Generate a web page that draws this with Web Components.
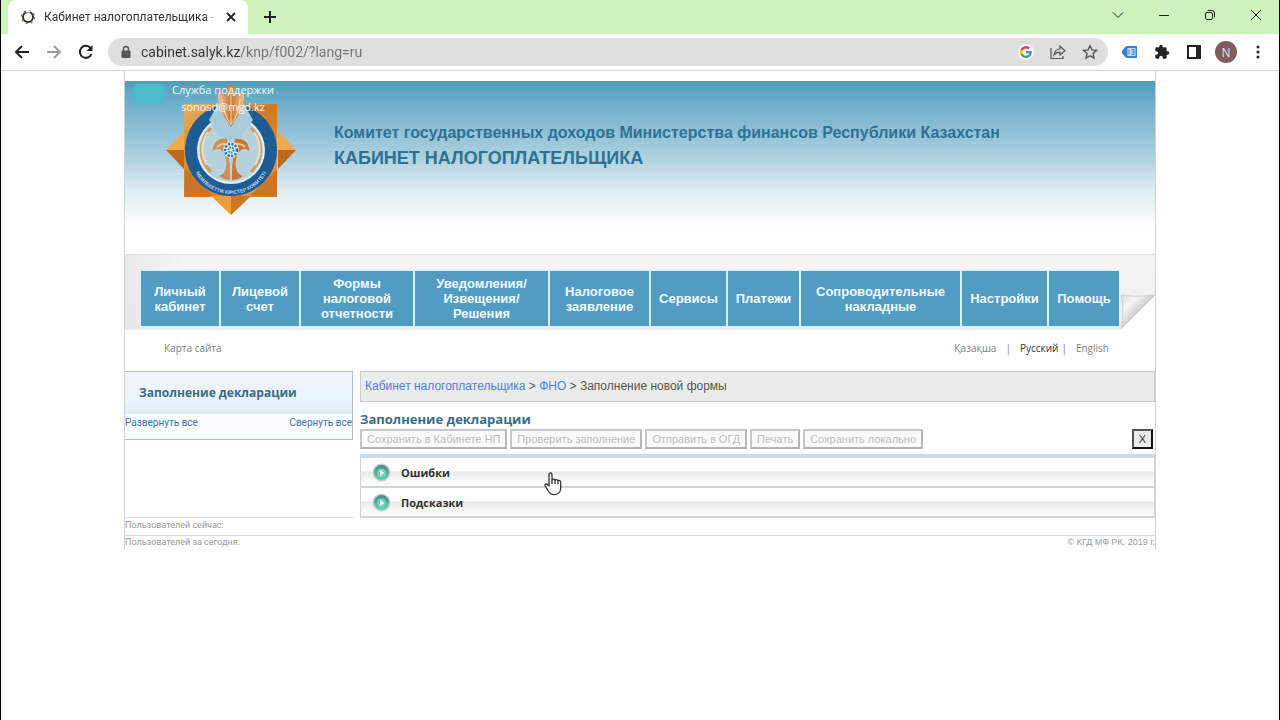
<!DOCTYPE html>
<html lang="ru">
<head>
<meta charset="utf-8">
<title>Кабинет налогоплательщика</title>
<style>
  html, body { margin: 0; height: 100%; }
  body {
    background: #fff;
    font-family: Roboto, "Open Sans", sans-serif;
    overflow: hidden;
  }
</style>
</head>
<body>

<browser-window>
  <browser-tabs slot="tabs">Кабинет налогоплательщика - С</browser-tabs>
  <browser-toolbar slot="toolbar" url="cabinet.salyk.kz/knp/f002/?lang=ru"></browser-toolbar>

  <portal-page>
    <portal-header slot="header">
      <span slot="committee">Комитет государственных доходов Министерства финансов Республики Казахстан</span>
      <span slot="title">КАБИНЕТ НАЛОГОПЛАТЕЛЬЩИКА</span>
    </portal-header>
    <portal-nav slot="header"></portal-nav>
    <portal-links slot="header"></portal-links>

    <side-panel slot="side" heading="Заполнение декларации"></side-panel>

    <bread-crumbs>
      <a href="#cabinet">Кабинет налогоплательщика</a> &gt; <a href="#fno">ФНО</a> &gt; Заполнение новой формы
    </bread-crumbs>
    <form-toolbar heading="Заполнение декларации"></form-toolbar>
    <accordion-row>Ошибки</accordion-row>
    <accordion-row>Подсказки</accordion-row>
    <hand-cursor></hand-cursor>

    <portal-footer slot="footer"></portal-footer>
  </portal-page>
</browser-window>

<script>
  class BrowserWindow extends HTMLElement {
    constructor() {
      super();
      this.attachShadow({ mode: 'open' });
      this.shadowRoot.innerHTML = `
        <style>
          :host {
            display: flex;
            flex-direction: column;
            box-sizing: border-box;
            min-height: 100%;
            border: solid #000;
            border-width: 0 1px;
            background: #fff;
          }
          main { flex: 1; }
        </style>
        <slot name="tabs"></slot>
        <slot name="toolbar"></slot>
        <main><slot></slot></main>
      `;
    }
  }

  class BrowserTabs extends HTMLElement {
    constructor() {
      super();
      this.attachShadow({ mode: 'open' });
      this.shadowRoot.innerHTML = `
        <style>
          :host {
            display: flex;
            align-items: stretch;
            height: 34px;
            background: #cdf2bb;
            color: #333;
            font-size: 12px;
          }
          .tab {
            display: flex;
            align-items: center;
            box-sizing: border-box;
            width: 240px;
            margin-left: 7px;
            padding: 0 10px 0 12px;
            background: #fff;
            border-radius: 8px 8px 0 0;
          }
          .label {
            flex: 1;
            margin: 0 6px 0 8px;
            overflow: hidden;
            white-space: nowrap;
            -webkit-mask: linear-gradient(90deg, #000 92%, transparent);
            mask: linear-gradient(90deg, #000 92%, transparent);
          }
          button {
            display: flex;
            align-items: center;
            justify-content: center;
            padding: 0;
            border: 0;
            background: none;
            color: #222;
          }
          .tab button { width: 14px; }
          .new { width: 44px; }
          .controls { display: flex; margin-left: auto; padding-top: 1px; align-items: flex-start; }
          .controls button { width: 46px; height: 27px; }
          svg { fill: none; stroke: currentColor; display: block; }
        </style>
        <div class="tab">
          <svg width="16" height="16" viewBox="0 0 16 16" stroke="#6b6455">
            <circle cx="8" cy="8" r="5" stroke-width="2"/>
            <circle cx="8" cy="8" r="6.5" stroke="#8d7a5e" stroke-width="1.5" stroke-dasharray="2 3.1"/>
            <path d="M6 2.5h4" stroke="#fff" stroke-width="2"/>
          </svg>
          <span class="label"><slot></slot></span>
          <button aria-label="Закрыть вкладку">
            <svg width="10" height="10" viewBox="0 0 10 10" stroke-width="1.8"><path d="M1 1l8 8M9 1L1 9"/></svg>
          </button>
        </div>
        <button class="new" aria-label="Новая вкладка">
          <svg width="12" height="12" viewBox="0 0 12 12" stroke-width="2"><path d="M6 0v12M0 6h12"/></svg>
        </button>
        <div class="controls">
          <button aria-label="Поиск вкладок"><svg width="12" height="12" viewBox="0 0 12 12"><path d="M1 3.5l5 5 5-5"/></svg></button>
          <button aria-label="Свернуть"><svg width="12" height="12" viewBox="0 0 12 12"><path d="M1 6.5h10"/></svg></button>
          <button aria-label="Развернуть"><svg width="12" height="12" viewBox="0 0 12 12"><rect x="1.5" y="3.5" width="7" height="7" rx="1.5"/><path d="M3.5 1.5H8A2.5 2.5 0 0 1 10.5 4v4.5"/></svg></button>
          <button aria-label="Закрыть"><svg width="12" height="12" viewBox="0 0 12 12"><path d="M1 1l10 10M11 1L1 11"/></svg></button>
        </div>
      `;
    }
  }

  class BrowserToolbar extends HTMLElement {
    constructor() {
      super();
      this.attachShadow({ mode: 'open' });
      this.shadowRoot.innerHTML = `
        <style>
          :host {
            display: flex;
            align-items: center;
            gap: 8px;
            box-sizing: border-box;
            height: 37px;
            padding: 0 9px;
            border-bottom: 1px solid #d5d5d5;
            background: #fff;
            color: #222;
          }
          button {
            display: flex;
            align-items: center;
            justify-content: center;
            flex: none;
            width: 24px;
            height: 24px;
            padding: 0;
            border: 0;
            background: none;
            color: inherit;
          }
          svg { display: block; }
          .line { fill: none; stroke: currentColor; }
          .omnibox {
            display: flex;
            flex: 1;
            align-items: center;
            gap: 8px;
            height: 28px;
            margin-left: 2px;
            padding: 0 6px 0 11px;
            border-radius: 14px;
            background: #dfdfdf;
            color: #555;
          }
          /* the host part of the address is darker than the path */
          input {
            flex: 1;
            min-width: 0;
            padding: 0;
            border: 0;
            outline: 0;
            font: 14px Roboto, "Open Sans", sans-serif;
            color: transparent;
            background: linear-gradient(90deg, #333 99px, #737373 99px);
            -webkit-background-clip: text;
            background-clip: text;
          }
          .forward { color: #999; }
          .google { width: 16px; height: 16px; background: #fff; border-radius: 50%; margin-right: 4px; }
          .avatar {
            width: 22px;
            height: 22px;
            margin: 0 1px;
            border-radius: 50%;
            background: #7d5e58;
            color: #f3e3df;
            font: 12px "Open Sans", sans-serif;
          }
          .tools { display: flex; align-items: center; gap: 8px; padding-left: 2px; }
        </style>
        <button aria-label="Назад"><svg class="line" width="16" height="16" viewBox="0 0 16 16" stroke-width="2"><path d="M15 8H2M8 2L2 8l6 6"/></svg></button>
        <button class="forward" aria-label="Вперёд"><svg class="line" width="16" height="16" viewBox="0 0 16 16" stroke-width="1.8"><path d="M1 8h13M8 2l6 6-6 6"/></svg></button>
        <button aria-label="Обновить"><svg class="line" width="16" height="16" viewBox="0 0 16 16" stroke-width="2"><path d="M13.5 10A6 6 0 1 1 12.5 4"/><path d="M14.5 1v6h-6z" fill="currentColor" stroke="none"/></svg></button>
        <div class="omnibox">
          <svg width="14" height="14" viewBox="0 0 14 14"><rect x="2.5" y="5.5" width="9" height="7.5" rx="1" fill="#555"/><path d="M4.5 6V4a2.5 2.5 0 0 1 5 0v2" fill="none" stroke="#555" stroke-width="1.5"/></svg>
          <input type="text" aria-label="Адресная строка">
          <button class="google" aria-label="Google">
            <svg width="12" height="12" viewBox="0 0 48 48">
              <path fill="#ea4335" d="M24 9.500c3.500 0 6.700 1.200 9.200 3.600l6.900-6.900C35.900 2.400 30.500 0 24 0 14.600 0 6.500 5.400 2.600 13.200l8 6.200C12.400 13.700 17.700 9.500 24 9.500z"/>
              <path fill="#4285f4" d="M47 24.600c0-1.600-.2-3.100-.4-4.600H24v9h12.900c-.6 3-2.200 5.500-4.700 7.200l7.700 6C44.400 38 47 32 47 24.600z"/>
              <path fill="#fbbc05" d="M10.500 28.600a14.500 14.500 0 0 1 0-9.200l-8-6.200a24 24 0 0 0 0 21.600z"/>
              <path fill="#34a853" d="M24 48c6.500 0 11.900-2.100 15.900-5.800l-7.700-6c-2.200 1.500-4.900 2.300-8.200 2.300-6.300 0-11.600-4.200-13.500-9.900l-8 6.200C6.500 42.600 14.600 48 24 48z"/>
            </svg>
          </button>
          <button aria-label="Поделиться"><svg class="line" width="16" height="16" viewBox="0 0 16 16" stroke-width="1.2"><path d="M1 4v10.500h12V12M4 11c.5-4 2.500-6 6-6V2.200l5 4.500-5 4.300V8.200C7.500 8.200 5.500 9 4 11z"/></svg></button>
          <button aria-label="Добавить в закладки"><svg class="line" width="16" height="16" viewBox="0 0 16 16" stroke-width="1.4"><path d="M8 1.700l1.900 4.200 4.500.5-3.400 3.100 1 4.500-4-2.300L4 14l1-4.500L1.600 6.400l4.500-.5z"/></svg></button>
        </div>
        <div class="tools">
          <button aria-label="Расширение"><svg width="16" height="14" viewBox="0 0 16 14"><path d="M4.500 1H15v12H4.500L0 8.500v-3z" fill="#3f7fd0"/><rect x="5.500" y="3" width="8" height="8" fill="#c9e0f8"/><path d="M7 4.500v5M9.500 4.500h2.500v5H9.500M9.500 7H12" fill="none" stroke="#3f7fd0"/></svg></button>
          <button aria-label="Расширения"><svg width="16" height="16" viewBox="0 0 24 24"><path fill="#222" d="M20.500 11H19V7a2 2 0 0 0-2-2h-4V3.500a2.500 2.500 0 0 0-5 0V5H4a2 2 0 0 0-2 2v3.800h1.500a2.700 2.700 0 0 1 0 5.400H2V20a2 2 0 0 0 2 2h3.800v-1.500a2.700 2.700 0 0 1 5.400 0V22H17a2 2 0 0 0 2-2v-4h1.500a2.500 2.500 0 0 0 0-5z"/></svg></button>
          <button aria-label="Боковая панель"><svg width="14" height="14" viewBox="0 0 14 14"><rect x="1" y="1" width="12" height="12" fill="none" stroke="#222" stroke-width="2"/><path d="M9 1h4v12H9z" fill="#222"/></svg></button>
          <button class="avatar">N</button>
          <button aria-label="Меню"><svg width="4" height="14" viewBox="0 0 4 14" fill="#222"><circle cx="2" cy="2" r="1.5"/><circle cx="2" cy="7" r="1.5"/><circle cx="2" cy="12" r="1.5"/></svg></button>
        </div>
      `;
    }

    connectedCallback() {
      this.shadowRoot.querySelector('input').value = this.getAttribute('url');
    }
  }

  class PortalPage extends HTMLElement {
    constructor() {
      super();
      this.attachShadow({ mode: 'open' });
      this.shadowRoot.innerHTML = `
        <style>
          :host {
            display: block;
            box-sizing: border-box;
            max-width: 1032px;
            margin: 0 auto;
            padding-top: 10px;
            border: solid #d3d3d3;
            border-width: 0 1px;
          }
          .columns {
            display: grid;
            grid-template-columns: 228px 1fr;
            gap: 7px;
          }
          .side { border-bottom: 1px solid #ddd; }
          .content { position: relative; min-width: 0; }
        </style>
        <slot name="header"></slot>
        <div class="columns">
          <div class="side"><slot name="side"></slot></div>
          <div class="content"><slot></slot></div>
        </div>
        <slot name="footer"></slot>
      `;
    }
  }

  class PortalHeader extends HTMLElement {
    constructor() {
      super();
      this.attachShadow({ mode: 'open' });
      this.shadowRoot.innerHTML = `
        <style>
          :host {
            display: grid;
            grid-template-columns: 209px 1fr;
            height: 173px;
            background: linear-gradient(#4f9aba 0, #65abc6 14px, #7ab5d0 32px, #a9d0df 74px, #dcebf2 108px, #fff 146px);
            font-family: "Liberation Sans", Arial, sans-serif;
          }
          .brand { position: relative; }
          .brand > svg { position: absolute; left: 40px; top: 3px; }
          .support {
            position: absolute;
            left: 9px;
            top: 0;
            display: flex;
            gap: 8px;
            color: #f2fafc;
            font: 11px/17px "Open Sans", "Noto Sans", sans-serif;
            text-align: center;
          }
          .support i { width: 30px; height: 20px; margin-top: 3px; background: #4dbccb; filter: blur(1px); }
          .support a { display: block; color: inherit; text-decoration: none; }
          .titles { padding-top: 39px; color: #2f7190; font-weight: bold; }
          .titles ::slotted(*) { display: block; }
          .committee { font-size: 16px; line-height: 25px; }
          .title { font-size: 18px; line-height: 26px; }
          .ring { font: bold 5px "Liberation Sans", sans-serif; fill: #c7d9e4; }
        </style>
        <div class="brand">
          <svg width="132" height="132" viewBox="-66 -66 132 132">
            <defs>
              <linearGradient id="gold" x1="0" y1="0" x2="1" y2="1">
                <stop offset="0" stop-color="#e8ae60"/><stop offset=".5" stop-color="#cf7b22"/><stop offset="1" stop-color="#e6a04a"/>
              </linearGradient>
              <linearGradient id="fan" x1="0" y1="0" x2="1" y2="0">
                <stop offset="0" stop-color="#f0c391"/><stop offset=".5" stop-color="#c87a35"/><stop offset="1" stop-color="#f0c391"/>
              </linearGradient>
              <path id="arc" d="M-40 4A40 40 0 0 0 40 4"/>
            </defs>
            <rect x="-47" y="-46" width="93" height="93" fill="url(#gold)"/>
            <path d="M-65 0l18-19V0zM47-19L65 0H47z" fill="#f0a950"/>
            <path d="M-65 0h18v19zM65 0H47v19z" fill="#bd681b"/>
            <path d="M-46 47l27-1-27-27zM46 47L19 46l27-27z" fill="#c9752a"/>
            <path d="M0 65l-20-19H0z" fill="#ee9e3b"/><path d="M0 65l20-19H0z" fill="#ce7720"/>
            <circle r="46" fill="#1d5c94"/>
            <circle r="34" fill="#e9eeee"/>
            <circle r="32" fill="#b5d2dd"/>
            <path d="M-20-22a30 30 0 0 0 0 44M20-22a30 30 0 0 1 0 44" fill="none" stroke="#d39a63" stroke-width="3"/>
            <path d="M-23-18a29 29 0 0 0-1 33M23-18a29 29 0 0 1 1 33" fill="none" stroke="#f4dfc6" stroke-width="2"/>
            <path d="M-13-46h26l9 16L8-10H-8l-14-20z" fill="#a7cddd"/>
            <path d="M0-66c-5 3-6 9-4 15-5-8-10-10-9-2 1 9 3 18 9 24l4 6 4-6c6-6 8-15 9-24 1-8-4-6-9 2 2-6 1-12-4-15z" fill="url(#fan)"/>
            <path d="M0-63v38M-9-51c1 10 4 19 9 25M9-51c-1 10-4 19-9 25" fill="none" stroke="#f6d8b2"/>
            <path d="M-4-11c-9-2-15 5-14 12 3-3 6-3 9 0 4 5 6 12 3 20-1 3-4 4-6 5 4 3 8 4 11 4 0-8 0-14-1-21z" fill="#d18e4e"/>
            <path d="M4-11c9-2 15 5 14 12-3-3-6-3-9 0-4 5-6 12-3 20 1 3 4 4 6 5-4 3-8 4-11 4 0-8 0-14 1-21z" fill="#c87835"/>
            <path d="M-14-3c4-4 8-4 11-1M14-3c-4-4-8-4-11-1" fill="none" stroke="#f3c692" stroke-width="2"/>
            <circle r="8" fill="#d9edf3"/>
            <circle r="6" fill="none" stroke="#1e6b9c" stroke-width="2.5" stroke-dasharray="2 1.5"/>
            <circle r="2.5" fill="none" stroke="#2d7eaa" stroke-width="2" stroke-dasharray="1.5 1"/>
            <text class="ring"><textPath href="#arc" startOffset="50%" text-anchor="middle">МЕМЛЕКЕТТІК КІРІСТЕР КОМИТЕТІ</textPath></text>
          </svg>
          <div class="support">
            <i></i>
            <div>Служба поддержки<a href="mailto:sonosd@mgd.kz">sonosd@mgd.kz</a></div>
          </div>
        </div>
        <div class="titles">
          <div class="committee"><slot name="committee"></slot></div>
          <div class="title"><slot name="title"></slot></div>
        </div>
      `;
    }
  }

  const NAV_ITEMS = [
    'Личный<br>кабинет',
    'Лицевой<br>счет',
    'Формы<br>налоговой<br>отчетности',
    'Уведомления/<br>Извещения/<br>Решения',
    'Налоговое<br>заявление',
    'Сервисы',
    'Платежи',
    'Сопроводительные<br>накладные',
    'Настройки',
    'Помощь',
  ];

  class PortalNav extends HTMLElement {
    constructor() {
      super();
      this.attachShadow({ mode: 'open' });
      this.shadowRoot.innerHTML = `
        <style>
          :host {
            display: block;
            position: relative;
            box-sizing: border-box;
            height: 76px;
            padding: 15px 35px 3px 15px;
            border-top: 1px solid #ddd;
            background: linear-gradient(90deg, #e9e9e9, transparent 60px), linear-gradient(#f5f5f5, #ededed);
          }
          nav {
            display: grid;
            grid-template-columns: 78fr 78fr 112fr 133fr 99fr 75fr 71fr 159fr 85fr 70fr;
            gap: 2px;
            padding: 1px;
            background: #d5f3fa;
          }
          a {
            display: flex;
            align-items: center;
            justify-content: center;
            height: 55px;
            background: #529bc2;
            color: #f0fbff;
            font: bold 13px/15px "Liberation Sans", Arial, sans-serif;
            text-align: center;
            text-decoration: none;
          }
          svg { position: absolute; right: 0; bottom: 0; }
        </style>
        <nav>${NAV_ITEMS.map((item) => `<a href="#"><span>${item}</span></a>`).join('')}</nav>
        <svg width="35" height="36" viewBox="0 0 35 36">
          <defs>
            <linearGradient id="curl" x1="0" y1="0" x2=".5" y2=".5">
              <stop offset="0" stop-color="#d9d9d9"/><stop offset=".5" stop-color="#f5f5f5"/><stop offset="1" stop-color="#cfcfcf"/>
            </linearGradient>
          </defs>
          <path d="M35 0v36H0z" fill="#fff"/>
          <path d="M1 35C3 24 4 12 1 1c12 2 24 1 34 0z" fill="url(#curl)" stroke="#ccc"/>
        </svg>
      `;
    }
  }

  class PortalLinks extends HTMLElement {
    constructor() {
      super();
      this.attachShadow({ mode: 'open' });
      this.shadowRoot.innerHTML = `
        <style>
          :host {
            display: flex;
            justify-content: space-between;
            height: 41px;
            padding: 0 46px 0 39px;
            color: #808080;
            font: 10px/37px "Open Sans", "Noto Sans", sans-serif;
          }
          a { color: inherit; text-decoration: none; }
          .languages { display: flex; gap: 9px; }
          .current { color: #333; }
          .current + span { margin-left: -6px; }
        </style>
        <a href="#map">Карта сайта</a>
        <div class="languages">
          <a href="#kk">Қазақша</a><span>|</span>
          <a class="current" href="#ru">Русский</a><span>|</span>
          <a href="#en">English</a>
        </div>
      `;
    }
  }

  class SidePanel extends HTMLElement {
    constructor() {
      super();
      this.attachShadow({ mode: 'open' });
      this.shadowRoot.innerHTML = `
        <style>
          :host {
            display: block;
            border: 1px solid #b4bec6;
            border-left: 0;
            background: #f8fcff;
          }
          h2 {
            margin: 0;
            padding: 0 14px;
            background: linear-gradient(#f0f4fa, #ebf4fc 60%, #d9ebfa);
            color: #376c84;
            font: bold 12px/42px "Open Sans", "Noto Sans", sans-serif;
          }
          div {
            display: flex;
            justify-content: space-between;
            height: 25px;
            font-size: 10px;
            line-height: 18px;
          }
          a { color: #3c74b4; text-decoration: none; }
        </style>
        <h2></h2>
        <div><a href="#expand">Развернуть все</a><a href="#collapse">Свернуть все</a></div>
      `;
    }

    connectedCallback() {
      this.shadowRoot.querySelector('h2').textContent = this.getAttribute('heading');
    }
  }

  class BreadCrumbs extends HTMLElement {
    constructor() {
      super();
      this.attachShadow({ mode: 'open' });
      this.shadowRoot.innerHTML = `
        <style>
          :host {
            display: block;
            padding: 0 4px;
            border: 1px solid #ccc;
            background: #ebebeb;
            color: #555;
            font: 12px/29px "Liberation Sans", Arial, sans-serif;
          }
          ::slotted(a) { color: #4a83d4; text-decoration: none; }
        </style>
        <slot></slot>
      `;
    }
  }

  class FormToolbar extends HTMLElement {
    constructor() {
      super();
      this.attachShadow({ mode: 'open' });
      this.shadowRoot.innerHTML = `
        <style>
          :host { display: block; padding-top: 8px; border-bottom: 4px solid #c9dbea; }
          h1 {
            margin: 0;
            color: #376c84;
            font: bold 13px/19px "Open Sans", "Noto Sans", sans-serif;
          }
          div { display: flex; gap: 3px; height: 25px; padding-right: 2px; align-items: flex-start; }
          button {
            box-sizing: border-box;
            height: 20px;
            padding: 0 5px;
            border: 2px solid #ccc;
            border-color: #c6c6c6 #b5b5b5 #b5b5b5 #c6c6c6;
            border-radius: 0;
            background: #fafafa;
            color: #333;
            font: 11px "Liberation Sans", Arial, sans-serif;
          }
          button:disabled { color: #bdbdbd; }
          .close {
            margin-left: auto;
            border-color: #555 #111 #111 #555;
            background: #ececec;
          }
        </style>
        <h1></h1>
        <div>
          <button disabled>Сохранить в Кабинете НП</button>
          <button disabled>Проверить заполнение</button>
          <button disabled>Отправить в ОГД</button>
          <button disabled>Печать</button>
          <button disabled>Сохранить локально</button>
          <button class="close">X</button>
        </div>
      `;
    }

    connectedCallback() {
      this.shadowRoot.querySelector('h1').textContent = this.getAttribute('heading');
    }
  }

  class AccordionRow extends HTMLElement {
    constructor() {
      super();
      this.attachShadow({ mode: 'open' });
      this.shadowRoot.innerHTML = `
        <style>
          :host { display: block; border: 1px solid #d3d3d3; border-width: 0 1px 2px; }
          button {
            display: flex;
            align-items: center;
            gap: 10px;
            width: 100%;
            height: 28px;
            padding: 0 11px;
            border: 0;
            background: linear-gradient(#fff 13px, #e9e9e9 14px, #f8f8f8 22px, #fbfbfb);
            color: #333;
            font: bold 11px "Open Sans", "Noto Sans", sans-serif;
          }
        </style>
        <button aria-expanded="false">
          <svg width="19" height="19" viewBox="0 0 19 19">
            <defs>
              <linearGradient id="ball" x1="0" y1="0" x2="0" y2="1">
                <stop offset="0" stop-color="#3f8f85"/><stop offset="1" stop-color="#5fd4b8"/>
              </linearGradient>
            </defs>
            <circle cx="9.5" cy="9.5" r="9" fill="#c3cdcb"/>
            <circle cx="9.5" cy="9.5" r="7.5" fill="url(#ball)"/>
            <circle cx="9.5" cy="10" r="4.5" fill="#7bcfc0"/>
            <path d="M8 7l4.500 3L8 13z" fill="#eefaf8"/>
          </svg>
          <slot></slot>
        </button>
      `;
    }
  }

  class HandCursor extends HTMLElement {
    constructor() {
      super();
      this.attachShadow({ mode: 'open' });
      this.shadowRoot.innerHTML = `
        <style>
          :host { position: absolute; left: 184px; top: 101px; pointer-events: none; }
          svg { display: block; }
        </style>
        <svg width="18" height="24" viewBox="0 0 18 24" fill="#fff" stroke="#333" stroke-width="1.3" stroke-linejoin="round">
          <path d="M5 14V2.500a1.500 1.500 0 0 1 3 0V8c.5-1.300 2.700-1.200 3 .4.600-1.200 2.700-.9 3 .6.800-1 2.700-.6 2.700 1.200V16c0 4-2.700 6.700-6.500 6.700-3.700 0-5.500-2.700-6.700-5L1.200 14c-.8-1.700 1-2.800 2.300-1.500z"/>
          <path d="M8 8v4M11 8.500V12M14 9.500V12" fill="none"/>
        </svg>
      `;
    }
  }

  class PortalFooter extends HTMLElement {
    constructor() {
      super();
      this.attachShadow({ mode: 'open' });
      this.shadowRoot.innerHTML = `
        <style>
          :host { display: block; padding-top: 1px; color: #999; font-size: 9px; line-height: 13px; }
          .now { height: 16px; border-bottom: 1px solid #ddd; }
          .today { display: flex; justify-content: space-between; }
          small { font: 9px/13px "Liberation Sans", Arial, sans-serif; }
        </style>
        <div class="now">Пользователей сейчас:</div>
        <div class="today"><span>Пользователей за сегодня:</span><small>© КГД МФ РК, 2019 г.</small></div>
      `;
    }
  }

  customElements.define('browser-window', BrowserWindow);
  customElements.define('browser-tabs', BrowserTabs);
  customElements.define('browser-toolbar', BrowserToolbar);
  customElements.define('portal-page', PortalPage);
  customElements.define('portal-header', PortalHeader);
  customElements.define('portal-nav', PortalNav);
  customElements.define('portal-links', PortalLinks);
  customElements.define('side-panel', SidePanel);
  customElements.define('bread-crumbs', BreadCrumbs);
  customElements.define('form-toolbar', FormToolbar);
  customElements.define('accordion-row', AccordionRow);
  customElements.define('hand-cursor', HandCursor);
  customElements.define('portal-footer', PortalFooter);
</script>
</body>
</html>
